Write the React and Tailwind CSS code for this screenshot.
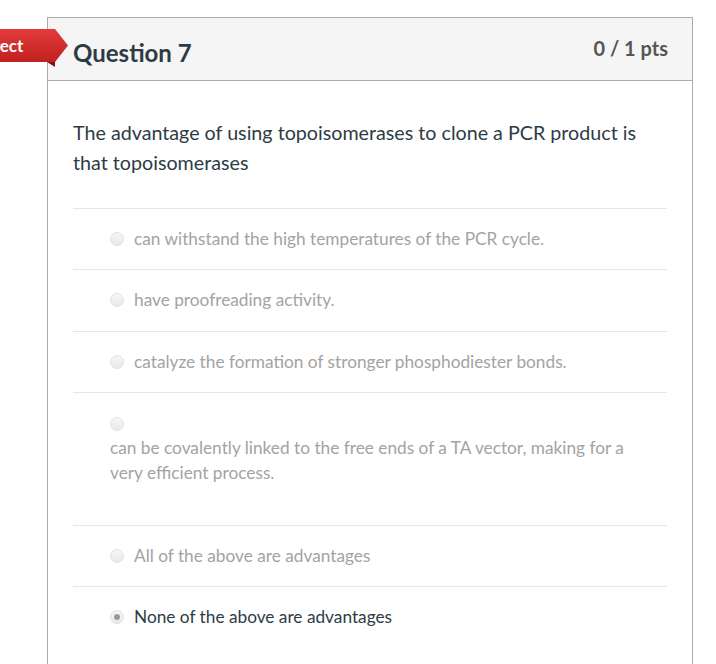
import React from 'react';

const answers = [
  { text: 'can withstand the high temperatures of the PCR cycle.' },
  { text: 'have proofreading activity.' },
  { text: 'catalyze the formation of stronger phosphodiester bonds.' },
  { text: 'can be covalently linked to the free ends of a TA vector, making for a very efficient process.', block: true },
  { text: 'All of the above are advantages' },
  { text: 'None of the above are advantages', selected: true },
];

const Radio = ({ selected }) => (
  <span className="flex h-[14px] w-[14px] shrink-0 items-center justify-center rounded-full border border-[#e2e2e2] bg-gradient-to-b from-[#f6f6f6] to-[#e9e9e9]">
    {selected && <span className="h-[6px] w-[6px] rounded-full bg-[#9a9a9a]" />}
  </span>
);

const App = () => {
  return (
    <div className="relative h-[664px] overflow-hidden bg-white pl-[47px] pt-[17px] font-['Lato','Liberation_Sans',sans-serif]">
      {/* Incorrect tag */}
      <div className="absolute left-[-52px] top-[29px] z-10 flex h-[33px] w-[120px] items-center bg-gradient-to-b from-[#e23b3b] to-[#c0201f] pl-[7px] text-[17px] font-bold text-white [clip-path:polygon(0_0,107px_0,120px_50%,107px_100%,0_100%)]">
        Incorrect
      </div>
      <div className="absolute left-[47px] top-[62px] z-0 h-0 w-0 border-l-[8px] border-t-[5px] border-l-transparent border-t-[#7d1414]" />

      <div className="w-[646px] border border-[#acacac] bg-white">
        {/* Header */}
        <div className="flex h-[63px] items-start justify-between border-b border-[#acacac] bg-[#f5f5f5] pl-[25px] pr-[24px]">
          <h2 className="mt-[20px] text-[24px] font-bold leading-[30px] text-[#2d3b45]">Question 7</h2>
          <span className="mt-[15px] text-[20px] font-bold leading-[30px] text-[#555555]">0 / 1 pts</span>
        </div>

        {/* Body */}
        <div className="px-[25px] pt-[37px] pb-10">
          <p className="text-[19.7px] leading-[30px] text-[#2d3b45]">
            The advantage of using topoisomerases to clone a PCR product is that topoisomerases
          </p>
          <div className="mt-[30px]">
            {answers.map((a, i) => (
              <div
                key={i}
                className={`border-t border-[#e6e6e6] pl-[37px] text-[17.25px] ${
                  a.selected ? 'text-[#2d3b45]' : 'text-[#a3a3a3]'
                } ${a.block ? 'pt-[20px] pb-[40px] leading-[25px]' : 'py-[18px] leading-[24.25px]'}`}
              >
                {a.block ? (
                  <div>
                    <div className="flex h-[22px] items-center">
                      <Radio />
                    </div>
                    <div className="pr-[30px]">{a.text}</div>
                  </div>
                ) : (
                  <div className="flex items-center gap-[10px]">
                    <Radio selected={a.selected} />
                    <span>{a.text}</span>
                  </div>
                )}
              </div>
            ))}
          </div>
        </div>
      </div>
    </div>
  );
};

export default App;
